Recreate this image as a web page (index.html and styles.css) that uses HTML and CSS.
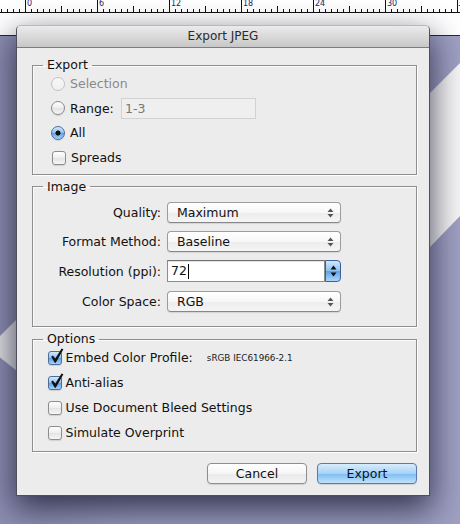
FILE: index.html
```html
<!DOCTYPE html>
<html lang="en">

<head>
    <meta charset="UTF-8">
    <meta name="viewport" content="width=device-width, initial-scale=1.0">
    <title>Export JPEG</title>
    <link rel="stylesheet" href="styles.css">
</head>

<body>
    <div class="desktop">
        <!-- ruler along the top of the document window -->
        <svg class="ruler" width="460" height="13" viewBox="0 0 460 13">
            <defs>
                <pattern id="ticks" patternUnits="userSpaceOnUse" x="25" y="0" width="72" height="13">
                    <rect x="0" y="0" width="1" height="13" fill="#111" />
                    <rect x="6" y="9" width="1" height="3" fill="#111" />
                    <rect x="12" y="9" width="1" height="3" fill="#111" />
                    <rect x="18" y="9" width="1" height="3" fill="#111" />
                    <rect x="24" y="9" width="1" height="3" fill="#111" />
                    <rect x="30" y="9" width="1" height="3" fill="#111" />
                    <rect x="36" y="6" width="1" height="6" fill="#111" />
                    <rect x="42" y="9" width="1" height="3" fill="#111" />
                    <rect x="48" y="9" width="1" height="3" fill="#111" />
                    <rect x="54" y="9" width="1" height="3" fill="#111" />
                    <rect x="60" y="9" width="1" height="3" fill="#111" />
                    <rect x="66" y="9" width="1" height="3" fill="#111" />
                </pattern>
            </defs>
            <rect x="0" y="0" width="460" height="12" fill="url(#ticks)" />
            <rect x="0" y="12" width="460" height="1" fill="#111" />
            <g class="ruler-num">
                <text x="27" y="6">0</text>
                <text x="99" y="6">6</text>
                <text x="171" y="6">12</text>
                <text x="243" y="6">18</text>
                <text x="315" y="6">24</text>
                <text x="387" y="6">30</text>
                <text x="458" y="6">36</text>
            </g>
        </svg>
        <div class="page-top"></div>

        <!-- pages lying on the pasteboard behind the dialog -->
        <svg class="pages" width="460" height="524" viewBox="0 0 460 524">
            <polygon points="429,94 462,61 462,214 429,248" fill="#f6f6f6" />
            <polygon points="-2,338 17,319 17,371 -2,356" fill="#e2e2e6" />
        </svg>

        <div class="dialog">
            <div class="titlebar">Export JPEG</div>
            <div class="dialog-body">
                <fieldset class="group group-export">
                    <legend>Export</legend>
                    <div class="row disabled"><span class="radio"></span>Selection</div>
                    <div class="row">
                        <span class="radio"></span>
                        <span class="range-label">Range:</span>
                        <span class="textfield textfield-disabled">1-3</span>
                    </div>
                    <div class="row"><span class="radio checked"></span>All</div>
                    <div class="row"><span class="checkbox"></span>Spreads</div>
                </fieldset>

                <fieldset class="group group-image">
                    <legend>Image</legend>
                    <div class="form-grid">
                        <label>Quality:</label>
                        <div class="popup">Maximum<span class="popup-arrows"></span></div>

                        <label>Format Method:</label>
                        <div class="popup">Baseline<span class="popup-arrows"></span></div>

                        <label>Resolution (ppi):</label>
                        <div class="spin">
                            <div class="textfield spin-field">72<span class="caret"></span></div>
                            <div class="stepper"></div>
                        </div>

                        <label>Color Space:</label>
                        <div class="popup">RGB<span class="popup-arrows"></span></div>
                    </div>
                </fieldset>

                <fieldset class="group group-options">
                    <legend>Options</legend>
                    <div class="row">
                        <span class="checkbox checked"></span>Embed Color Profile:
                        <span class="profile-name">sRGB IEC61966-2.1</span>
                    </div>
                    <div class="row"><span class="checkbox checked"></span>Anti-alias</div>
                    <div class="row"><span class="checkbox"></span>Use Document Bleed Settings</div>
                    <div class="row"><span class="checkbox"></span>Simulate Overprint</div>
                </fieldset>

                <div class="buttons">
                    <button type="button" class="btn">Cancel</button>
                    <button type="button" class="btn btn-default">Export</button>
                </div>
            </div>
        </div>
    </div>
</body>

</html>
```

FILE: styles.css
```css
body {
    margin: 0;
    font-family: "DejaVu Sans", "Lucida Grande", sans-serif;
    font-size: 12.5px;
    color: #111;
    background-color: #9d9dc2;
}

.desktop {
    position: relative;
    width: 460px;
    height: 524px;
    overflow: hidden;
    background: linear-gradient(90deg, #8f8fb4, #9d9dc2 30%, #9d9dc2 80%, #a0a0c4);
}

.ruler {
    display: block;
    background-color: #fff;
}

.ruler-num {
    font-family: "DejaVu Sans", sans-serif;
    font-size: 8px;
    fill: #1b2466;
}

.page-top {
    height: 22px;
    background-color: #fff;
    border-bottom: 1px solid #25253d;
}

.pages {
    position: absolute;
    left: 0;
    top: 0;
}

/* dialog window */
.dialog {
    position: absolute;
    left: 16px;
    top: 25px;
    width: 412px;
    border: 1px solid #4f4f5a;
    border-top-color: #b8b8b8;
    border-radius: 5px 5px 0 0;
    background-color: #ececec;
    box-shadow: 0 12px 32px 2px rgba(14, 14, 38, 0.72);
}

.titlebar {
    height: 21px;
    line-height: 21px;
    text-align: center;
    font-size: 12px;
    color: #2a2a2a;
    border-radius: 4px 4px 0 0;
    border-bottom: 1px solid #7c7c7c;
    background: linear-gradient(#ebebeb, #d6d6d6 60%, #c7c7c7);
}

.dialog-body {
    display: flex;
    flex-direction: column;
    gap: 4px;
    padding: 9px 12px 11px 15px;
}

/* group boxes */
.group {
    margin: 0;
    padding: 0;
    min-width: 0;
    border: 1px solid #8e8e8e;
    box-shadow: 1px 1px 0 #fff, inset 1px 1px 0 #fbfbfb;
}

.group legend {
    margin-left: 10px;
    padding: 0 4px;
    line-height: 16px;
    color: #111;
}

.row {
    display: flex;
    align-items: center;
    gap: 5px;
    white-space: nowrap;
}

.group-export {
    display: flex;
    flex-direction: column;
    padding-bottom: 6px;
}

.group-export .row {
    height: 21px;
    padding-left: 18px;
}

.group-export .row + .row {
    margin-top: 3.7px;
}

.group-export .row:last-child {
    padding-left: 19px;
}

.group-image {
    margin-top: -0.5px;
    padding: 6.5px 0 14px;
}

.group-options {
    margin-top: 0;
    padding: 0.5px 0 8px;
}

.group-options .row {
    height: 20px;
    padding-left: 14.5px;
    gap: 4px;
}

.group-options .row + .row {
    margin-top: 5px;
}

.disabled {
    color: #8a8a8a;
}

/* radio buttons and check boxes */
.radio {
    box-sizing: border-box;
    flex: none;
    width: 14px;
    height: 14px;
    border-radius: 50%;
    border: 1px solid #8a8a8a;
    background: linear-gradient(#fefefe, #eeeeee 50%, #e2e2e2 51%, #f6f6f6);
    box-shadow: 0 1px 1px rgba(0, 0, 0, 0.12);
}

.disabled .radio {
    border-color: #c2c2c2;
    background: linear-gradient(#f8f8f8, #efefef);
    box-shadow: none;
}

.radio.checked {
    border-color: #4d6d9c;
    background:
        radial-gradient(circle at 50% 50%, #111 2.2px, transparent 2.9px),
        linear-gradient(#d3e8fa, #8cc0f1 50%, #5d9fe6 51%, #a6d4f8);
}

.checkbox {
    position: relative;
    box-sizing: border-box;
    flex: none;
    width: 14px;
    height: 14px;
    border-radius: 3px;
    border: 1px solid #8d8d8d;
    background: linear-gradient(#fefefe, #eeeeee 50%, #e3e3e3 51%, #f6f6f6);
    box-shadow: 0 1px 1px rgba(0, 0, 0, 0.12);
}

.checkbox.checked {
    border-color: #4d6d9c;
    background: linear-gradient(#d3e8fa, #8cc0f1 50%, #5d9fe6 51%, #a6d4f8);
}

.checkbox.checked::after {
    content: "";
    position: absolute;
    left: 1px;
    top: -4px;
    width: 14px;
    height: 16px;
    background: url("data:image/svg+xml,%3Csvg xmlns='http://www.w3.org/2000/svg' width='14' height='16' viewBox='0 0 14 16'%3E%3Cpath d='M1.2 8.8 L2.8 7.4 L5.3 10.4 L11.6 0.4 L13.4 1.2 L5.8 14.8 L4.8 14.8 Z' fill='%23111'/%3E%3C/svg%3E") no-repeat;
}

.range-label {
    width: 46px;
}

.textfield {
    box-sizing: border-box;
    height: 21px;
    line-height: 19px;
    padding-left: 3px;
    border: 1px solid #8c8c8c;
    border-top-color: #6f6f6f;
    background-color: #fff;
    box-shadow: inset 0 1px 1px rgba(0, 0, 0, 0.12);
}

.textfield-disabled {
    width: 135px;
    color: #777;
    border-color: #d2d2d2;
    background-color: #efefef;
    box-shadow: none;
}

/* image settings */
.form-grid {
    display: grid;
    grid-template-columns: 128px 174px;
    grid-auto-rows: 22px;
    column-gap: 6px;
    row-gap: 7.7px;
    align-items: center;
}

.form-grid label {
    text-align: right;
}

.popup {
    position: relative;
    box-sizing: border-box;
    height: 21px;
    line-height: 19px;
    padding-left: 9px;
    border: 1px solid #9c9c9c;
    border-bottom-color: #878787;
    border-radius: 4px;
    background: linear-gradient(#ffffff, #f7f7f7 50%, #ececec 51%, #f5f5f5);
    box-shadow: 0 1px 1px rgba(0, 0, 0, 0.1);
}

.popup-arrows {
    position: absolute;
    right: 6px;
    top: 5px;
    width: 7px;
    height: 10px;
    background: url("data:image/svg+xml,%3Csvg xmlns='http://www.w3.org/2000/svg' width='7' height='10' viewBox='0 0 7 10'%3E%3Cpath d='M0.5 4 L3.5 0.5 L6.5 4 Z M0.5 6 L3.5 9.5 L6.5 6 Z' fill='%23555'/%3E%3C/svg%3E") no-repeat;
}

.spin {
    display: flex;
    height: 22px;
}

.spin-field {
    flex: 1;
    height: 22px;
    line-height: 20px;
    display: flex;
    align-items: center;
}

.caret {
    width: 1px;
    height: 15px;
    margin-left: 1px;
    background-color: #000;
}

.stepper {
    box-sizing: border-box;
    width: 16px;
    height: 22px;
    border: 1px solid #3f5f98;
    border-radius: 0 4px 4px 0;
    background:
        url("data:image/svg+xml,%3Csvg xmlns='http://www.w3.org/2000/svg' width='7' height='12' viewBox='0 0 7 12'%3E%3Cpath d='M0.5 4.5 L3.5 0.5 L6.5 4.5 Z M0.5 7.5 L3.5 11.5 L6.5 7.5 Z' fill='%23111'/%3E%3C/svg%3E") no-repeat 3.5px 4px,
        linear-gradient(#cfe6fb, #8cc1f1 50%, #5fa1e7 51%, #a9d6fa);
}

.profile-name {
    margin-left: 10px;
    font-size: 8.8px;
    color: #1a1a1a;
}

/* buttons */
.buttons {
    display: flex;
    justify-content: flex-end;
    gap: 10px;
    margin-top: 7px;
}

.btn {
    width: 100px;
    height: 21px;
    padding: 0;
    font-family: inherit;
    font-size: 12.5px;
    color: #111;
    border: 1px solid #8e8e8e;
    border-radius: 4px;
    background: linear-gradient(#ffffff, #f6f6f6 50%, #e9e9e9 51%, #f3f3f3);
    box-shadow: 0 1px 1px rgba(0, 0, 0, 0.12);
}

.btn-default {
    border-color: #5a7aaa;
    background: linear-gradient(#d8ecfc, #a7d2f7 50%, #7dbcf2 51%, #bfe3fb);
}
```
